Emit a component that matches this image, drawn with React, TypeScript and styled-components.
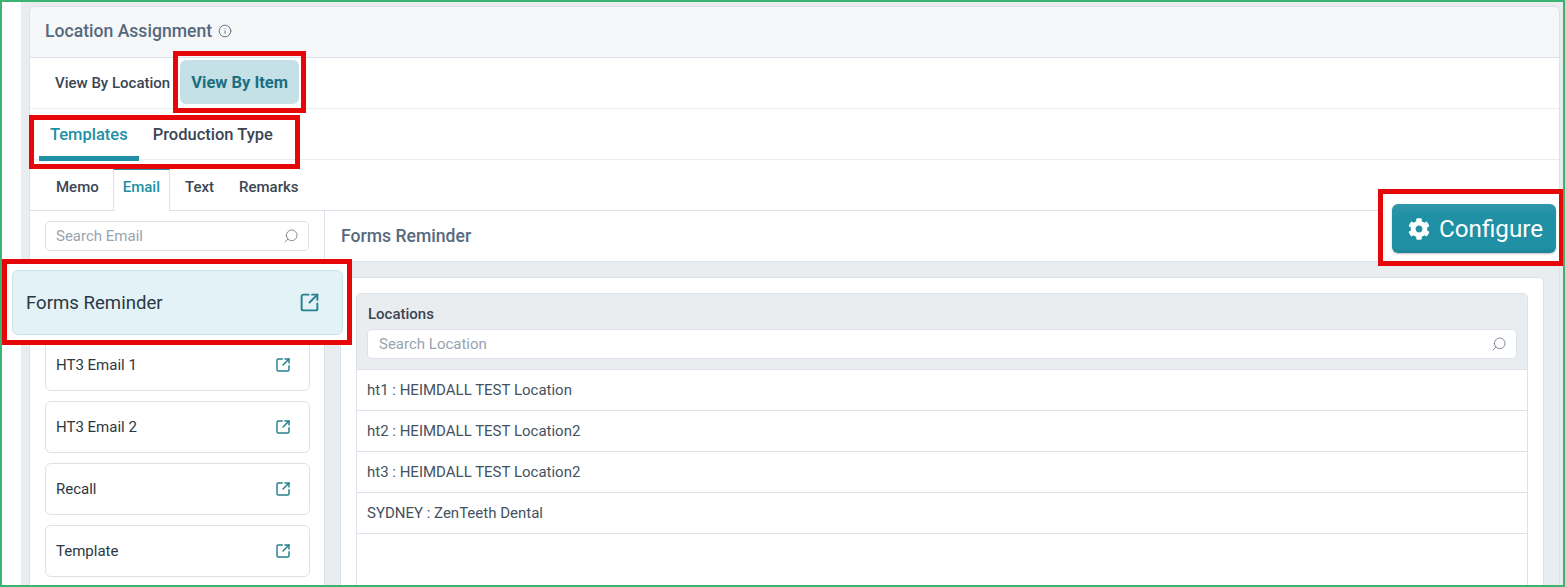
import React from 'react';
import styled, { createGlobalStyle } from 'styled-components';
import { Info, Search, SquareArrowOutUpRight } from 'lucide-react';
import { FaCog } from 'react-icons/fa';

const GlobalStyle = createGlobalStyle`
    html, body {
        margin: 0;
        padding: 0;
        background: #ffffff;
    }
    * {
        box-sizing: border-box;
    }
`;

const Frame = styled.div`
    position: relative;
    width: 1565px;
    height: 587px;
    overflow: hidden;
    border: 2px solid #3cb371;
    background: #ffffff;
    padding-left: 19px;
    font-family: Roboto, "Liberation Sans", sans-serif;
`;

const Page = styled.div`
    height: 100%;
    background: #e9edf0;
    padding: 4px 3px 0 8px;
`;

const Card = styled.div`
    height: 100%;
    display: flex;
    flex-direction: column;
    background: #ffffff;
    border: 1px solid #dde2ea;
    border-bottom: none;
    border-radius: 6px 6px 0 0;
`;

const CardHeader = styled.div`
    height: 51px;
    flex: none;
    display: flex;
    align-items: center;
    gap: 6px;
    padding: 0 0 2px 15px;
    background: #f5f7f9;
    border-bottom: 1px solid #dde2ea;
    border-radius: 6px 6px 0 0;
    font-size: 17.6px;
    font-weight: 500;
    color: #56697e;
`;

const ViewRow = styled.div`
    height: 51px;
    flex: none;
    display: flex;
    align-items: flex-start;
    padding: 2px 0 0 25px;
    border-bottom: 1px solid #e9edf0;
`;

const ViewTab = styled.div<{ $active?: boolean }>`
    height: 44px;
    display: flex;
    align-items: center;
    justify-content: center;
    margin-left: ${p => (p.$active ? '10px' : '0')};
    width: ${p => (p.$active ? '119px' : 'auto')};
    border-radius: 6px;
    background: ${p => (p.$active ? '#c5e1e7' : 'transparent')};
    color: ${p => (p.$active ? '#1a6f80' : '#3a4654')};
    font-size: ${p => (p.$active ? '16.5px' : '15px')};
    font-weight: ${p => (p.$active ? 700 : 500)};
    padding-top: ${p => (p.$active ? '0' : '1px')};
`;

const TypeRow = styled.div`
    height: 51px;
    flex: none;
    display: flex;
    padding-left: 9px;
    border-bottom: 1px solid #e9edf0;
`;

const TypeTab = styled.div<{ $active?: boolean }>`
    height: 52px;
    padding: 15px 11px 0;
    font-size: 16.5px;
    font-weight: 500;
    line-height: 21px;
    margin-right: ${p => (p.$active ? '3px' : '0')};
    color: ${p => (p.$active ? '#2090a5' : '#3a4654')};
    border-bottom: ${p => (p.$active ? '5px solid #2090a5' : 'none')};
`;

const ChannelRow = styled.div`
    height: 51px;
    flex: none;
    display: flex;
    align-items: flex-end;
    gap: 1px;
    padding-left: 14px;
    border-bottom: 1px solid #dde2ea;
`;

const ChannelTab = styled.div<{ $active?: boolean }>`
    height: 42px;
    margin-bottom: -1px;
    margin-left: ${p => (p.$active ? '1px' : '0')};
    margin-right: ${p => (p.$active ? '2px' : '0')};
    padding: 0 ${p => (p.$active ? '9px' : '11px')} 7px;
    display: flex;
    align-items: center;
    font-size: 15px;
    font-weight: 500;
    color: ${p => (p.$active ? '#2090a5' : '#3a4654')};
    background: ${p => (p.$active ? '#ffffff' : 'transparent')};
    border: 1px solid ${p => (p.$active ? '#dde2ea' : 'transparent')};
    border-top-color: ${p => (p.$active ? '#2090a5' : 'transparent')};
    border-bottom: none;
`;

const Body = styled.div`
    flex: 1;
    min-height: 0;
    display: flex;
`;

const Sidebar = styled.div`
    width: 295px;
    flex: none;
    padding: 10px 14px 0 15px;
    border-right: 1px solid #dde2ea;
    display: flex;
    flex-direction: column;
`;

const SearchBox = styled.div<{ $flat?: boolean }>`
    height: 30px;
    flex: none;
    display: flex;
    align-items: center;
    justify-content: space-between;
    padding: 0 9px 0 ${p => (p.$flat ? '11px' : '10px')};
    margin-right: ${p => (p.$flat ? '0' : '1px')};
    background: #ffffff;
    border: 1px solid #dde2ea;
    border-radius: 5px;
    font-size: 15px;
    color: #97a4b1;
`;

const FlippedSearch = styled(Search)`
    transform: scaleX(-1);
    color: #75838f;
`;

const ItemList = styled.div`
    margin-top: 88px;
    display: flex;
    flex-direction: column;
    gap: 10px;
`;

const Item = styled.div`
    height: 52px;
    flex: none;
    display: flex;
    align-items: center;
    justify-content: space-between;
    padding: 0 18px 1px 10px;
    border: 1px solid #dde2ea;
    border-radius: 6px;
    font-size: 15px;
    color: #2c3742;
`;

const ItemIcon = styled(SquareArrowOutUpRight)`
    color: #25808f;
`;

const Detail = styled.div`
    flex: 1;
    min-width: 0;
    display: flex;
    flex-direction: column;
`;

const DetailHeader = styled.div`
    height: 51px;
    flex: none;
    display: flex;
    align-items: center;
    padding-left: 16px;
    border-bottom: 1px solid #dde2ea;
    font-size: 17.6px;
    font-weight: 500;
    color: #56697e;
`;

const DetailBody = styled.div`
    flex: 1;
    min-height: 0;
    background: #e9edf0;
    padding: 15px 15px 0;
`;

const WhiteCard = styled.div`
    height: 100%;
    background: #ffffff;
    border: 1px solid #dde2ea;
    border-bottom: none;
    border-radius: 5px 5px 0 0;
    padding: 15px 15px 0;
`;

const Panel = styled.div`
    height: 100%;
    border: 1px solid #dde2ea;
    border-bottom: none;
    border-radius: 5px 5px 0 0;
`;

const PanelHeader = styled.div`
    height: 76px;
    background: #e9edf0;
    border-bottom: 1px solid #dde2ea;
    padding: 11px 10px 0;
`;

const PanelTitle = styled.div`
    height: 24px;
    padding-left: 1px;
    font-size: 15px;
    font-weight: 500;
    line-height: 18px;
    color: #3a4654;
`;

const LocationRow = styled.div`
    height: 41px;
    display: flex;
    align-items: center;
    padding: 0 10px 1px;
    border-bottom: 1px solid #dde2ea;
    font-size: 15px;
    color: #44525f;
`;

const Highlight = styled.div<{ $x: number; $y: number; $w: number; $h: number }>`
    position: absolute;
    left: ${p => p.$x}px;
    top: ${p => p.$y}px;
    width: ${p => p.$w}px;
    height: ${p => p.$h}px;
    border: 5px solid #e60808;
    pointer-events: none;
`;

const BigReminder = styled.div`
    position: absolute;
    left: 0;
    top: 257px;
    width: 350px;
    height: 86px;
    padding: 6px 4px 5px 5px;
    background: #ffffff;
    border: 5px solid #e60808;
`;

const BigReminderInner = styled.div`
    height: 100%;
    display: flex;
    align-items: center;
    justify-content: space-between;
    padding: 0 22px 0 13px;
    background: #e2f2f6;
    border: 1px solid #c9e3ea;
    border-radius: 6px;
    font-size: 18.6px;
    color: #2c3742;
`;

const ConfigureBox = styled.div`
    position: absolute;
    left: 1376px;
    top: 187px;
    width: 186px;
    height: 77px;
    display: flex;
    align-items: center;
    justify-content: flex-end;
    padding: 1px 3px 0 0;
    background: #ffffff;
    border: 5px solid #e60808;
`;

const ConfigureButton = styled.button`
    width: 164px;
    height: 49px;
    display: flex;
    align-items: center;
    gap: 9px;
    padding: 1px 0 0 16px;
    border: none;
    border-radius: 6px;
    background: linear-gradient(#3097ab, #2090a5 25%, #2090a5 90%, #1c8296);
    box-shadow: 0 1px 2px rgba(0, 0, 0, 0.25);
    color: #ffffff;
    font-family: inherit;
    font-size: 24.2px;
`;

const items = ['HT3 Email 1', 'HT3 Email 2', 'Recall', 'Template'];

const locations = [
    'ht1 : HEIMDALL TEST Location',
    'ht2 : HEIMDALL TEST Location2',
    'ht3 : HEIMDALL TEST Location2',
    'SYDNEY : ZenTeeth Dental',
];

export default function App() {
    return (
        <Frame>
            <GlobalStyle />
            <Page>
                <Card>
                    <CardHeader>
                        Location Assignment
                        <Info size={14} color="#5d6e80" strokeWidth={1.6} />
                    </CardHeader>
                    <ViewRow>
                        <ViewTab>View By Location</ViewTab>
                        <ViewTab $active>View By Item</ViewTab>
                    </ViewRow>
                    <TypeRow>
                        <TypeTab $active>Templates</TypeTab>
                        <TypeTab>Production Type</TypeTab>
                    </TypeRow>
                    <ChannelRow>
                        <ChannelTab>Memo</ChannelTab>
                        <ChannelTab $active>Email</ChannelTab>
                        <ChannelTab>Text</ChannelTab>
                        <ChannelTab>Remarks</ChannelTab>
                    </ChannelRow>
                    <Body>
                        <Sidebar>
                            <SearchBox>
                                Search Email
                                <FlippedSearch size={16} strokeWidth={1.4} />
                            </SearchBox>
                            <ItemList>
                                {items.map(item => (
                                    <Item key={item}>
                                        {item}
                                        <ItemIcon size={16} strokeWidth={2.2} />
                                    </Item>
                                ))}
                            </ItemList>
                        </Sidebar>
                        <Detail>
                            <DetailHeader>Forms Reminder</DetailHeader>
                            <DetailBody>
                                <WhiteCard>
                                    <Panel>
                                        <PanelHeader>
                                            <PanelTitle>Locations</PanelTitle>
                                            <SearchBox $flat>
                                                Search Location
                                                <FlippedSearch size={16} strokeWidth={1.4} />
                                            </SearchBox>
                                        </PanelHeader>
                                        {locations.map(location => (
                                            <LocationRow key={location}>{location}</LocationRow>
                                        ))}
                                    </Panel>
                                </WhiteCard>
                            </DetailBody>
                        </Detail>
                    </Body>
                </Card>
            </Page>
            <Highlight $x={171} $y={49} $w={133} $h={62} />
            <Highlight $x={27} $y={113} $w={271} $h={54} />
            <BigReminder>
                <BigReminderInner>
                    Forms Reminder
                    <ItemIcon size={21} strokeWidth={2.2} />
                </BigReminderInner>
            </BigReminder>
            <ConfigureBox>
                <ConfigureButton>
                    <FaCog size={22} />
                    Configure
                </ConfigureButton>
            </ConfigureBox>
        </Frame>
    );
}
